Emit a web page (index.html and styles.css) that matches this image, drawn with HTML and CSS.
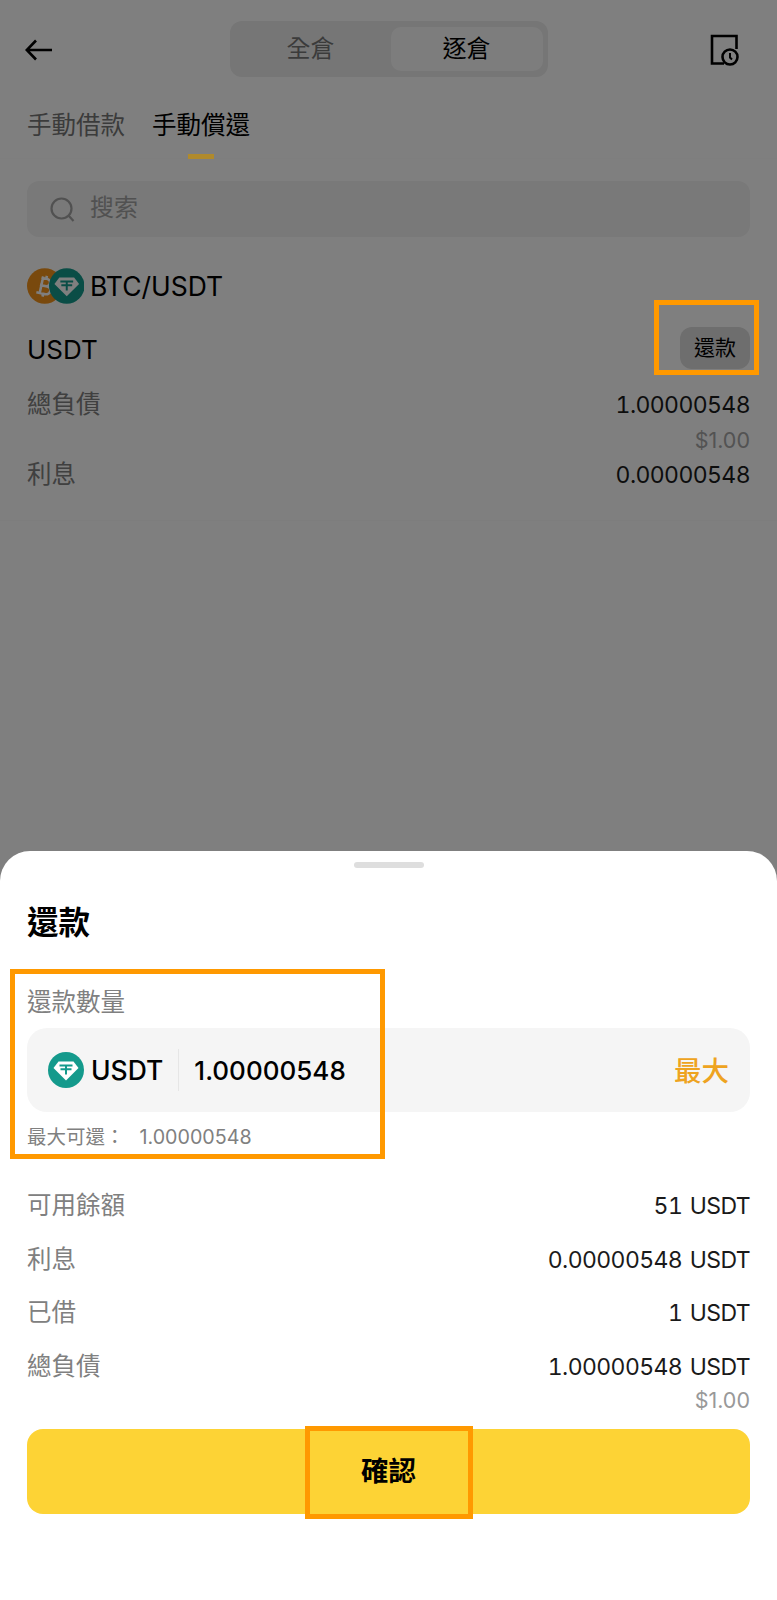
FILE: index.html
```html
<!DOCTYPE html>
<html lang="zh-Hant">
<head>
  <meta charset="UTF-8">
  <title>還款</title>
  <meta name="viewport" content="width=device-width, initial-scale=1.0">
  <link rel="stylesheet" href="styles.css">
</head>
<body>

<svg class="defs" width="0" height="0">
  <symbol id="tether" viewBox="0 0 36 36">
    <circle cx="18" cy="18" r="18" fill="#149a8c"/>
    <path d="M10.5 9.5h15l5 6.5L18 28.5 5.5 16z" fill="#fff"/>
    <path d="M11.5 13.5h13M18 13.5v9M12.5 17.2h11" stroke="#149a8c" stroke-width="2" fill="none"/>
  </symbol>
  <symbol id="btc" viewBox="0 0 36 36">
    <circle cx="18" cy="18" r="18" fill="#f2931a"/>
    <path d="M13 10.5h6.5a3.8 3.8 0 0 1 0 7.5H13m0 0h7.5a4 4 0 0 1 0 8H11M14.5 9v18M18 7.5v3M18 26v3" stroke="#fff" stroke-width="2.6" fill="none" transform="rotate(12 18 18)"/>
  </symbol>
</svg>

<div class="behind">
  <div class="header">
    <svg class="back" width="28" height="22" viewBox="0 0 28 22">
      <path d="M27 11H2M11 1.5L1.8 11l9.2 9.5" stroke="#000" stroke-width="2.6" fill="none"/>
    </svg>
    <div class="segment">
      <div class="segment-tab">全倉</div>
      <div class="segment-tab active">逐倉</div>
    </div>
    <svg class="history" width="30" height="32" viewBox="0 0 30 32">
      <path d="M14 29.500H2V2h24.500v13" stroke="#000" stroke-width="2.600" fill="none"/>
      <circle cx="20" cy="23" r="7.500" stroke="#000" stroke-width="2.600" fill="none"/>
      <path d="M20 19v4.500l2 2" stroke="#000" stroke-width="2" fill="none"/>
    </svg>
  </div>

  <div class="tabs">
    <div class="tab">手動借款</div>
    <div class="tab active">手動償還</div>
  </div>

  <div class="search">
    <svg width="25" height="25" viewBox="0 0 25 25">
      <circle cx="11.500" cy="11.500" r="10" stroke="#a3a3a3" stroke-width="2.200" fill="none"/>
      <path d="M18.500 18.500l5 5.500" stroke="#a3a3a3" stroke-width="2.200" fill="none"/>
    </svg>
    <span>搜索</span>
  </div>

  <div class="pair">
    <div class="pair-icons">
      <svg class="coin-back" width="36" height="36"><use href="#btc"/></svg>
      <svg class="coin-front" width="36" height="36"><use href="#tether"/></svg>
    </div>
    <span>BTC/USDT</span>
  </div>

  <div class="asset-row">
    <span>USDT</span>
    <div class="repay-btn">還款</div>
  </div>

  <div class="row first">
    <span class="label">總負債</span>
    <span class="value">1.00000548</span>
  </div>
  <div class="sub-value">$1.00</div>
  <div class="row after-sub">
    <span class="label">利息</span>
    <span class="value">0.00000548</span>
  </div>
  <div class="behind-line"></div>
</div>

<div class="scrim"></div>

<div class="sheet">
  <div class="handle"></div>
  <h2>還款</h2>
  <div class="field-label">還款數量</div>
  <div class="amount-box">
    <svg width="36" height="36"><use href="#tether"/></svg>
    <span class="coin-name">USDT</span>
    <div class="divider"></div>
    <span class="amount">1.00000548</span>
    <span class="max">最大</span>
  </div>
  <div class="max-line"><span>最大可還：</span><span class="max-value">1.00000548</span></div>

  <div class="details">
    <div class="row"><span class="label">可用餘額</span><span class="value">51 USDT</span></div>
    <div class="row"><span class="label">利息</span><span class="value">0.00000548 USDT</span></div>
    <div class="row"><span class="label">已借</span><span class="value">1 USDT</span></div>
    <div class="row"><span class="label">總負債</span><span class="value">1.00000548 USDT</span></div>
  </div>
  <div class="sub-value sheet-sub">$1.00</div>
  <div class="confirm">確認</div>
</div>

<!-- recuadros naranjas del tutorial -->
<div class="mark mark-repay"></div>
<div class="mark mark-amount"></div>
<div class="mark mark-confirm"></div>

</body>
</html>
```

FILE: styles.css
```css
* { box-sizing: border-box; }
body {
  position: relative;
  width: 777px;
  height: 1600px;
  margin: 0;
  overflow: hidden;
  background: #fff;
  color: #000;
  font-family: Inter, "Noto Sans CJK TC", sans-serif;
}
.defs { position: absolute; }

.behind { height: 851px; padding: 21px 27px 0; }
.header { display: grid; grid-template-columns: 1fr auto 1fr; align-items: center; }
.back { margin-left: -2px; margin-top: 2px; }
.history { justify-self: end; margin-right: 10px; margin-top: 2px; }
.segment {
  display: flex;
  gap: 4px;
  width: 318px;
  height: 56px;
  padding: 6px 5px;
  background: #ececec;
  border-radius: 12px;
}
.segment-tab {
  flex: 1;
  border-radius: 10px;
  font-size: 24px;
  line-height: 44px;
  text-align: center;
  color: #777;
}
.segment-tab.active { background: #fbfbfb; color: #000; }

.tabs { display: flex; gap: 27px; margin: 32px -27px 0; padding: 0 27px; height: 50px; border-bottom: 1px solid #fcfcfc; }
.tab { height: 50px; font-size: 24.5px; line-height: 32px; color: #777; }
.tab.active { color: #000; }
.tab.active::after {
  content: "";
  position: relative;
  z-index: 1;
  display: block;
  width: 26px;
  height: 5px;
  margin: 13px auto 0;
  background: #b08a2c;
}

.search {
  display: flex;
  align-items: center;
  gap: 15px;
  height: 56px;
  margin-top: 22px;
  padding-left: 23px;
  background: #f2f2f2;
  border-radius: 12px;
  font-size: 24px;
  line-height: 50px;
  color: #a3a3a3;
}
.search span { height: 50px; margin-top: -2px; }

.pair { display: flex; align-items: center; gap: 6px; height: 36px; margin-top: 31px; font-size: 26.500px; }
.pair-icons { display: flex; width: 57px; }
.coin-front { margin-left: -14px; }

.asset-row { display: flex; justify-content: space-between; align-items: center; height: 42px; margin-top: 23px; font-size: 26px; }
.asset-row > span { padding-top: 2px; }
.repay-btn {
  width: 70px;
  height: 42px;
  background: #dcdcdc;
  border-radius: 12px;
  font-size: 21px;
  line-height: 42px;
  text-align: center;
}

.row { display: flex; justify-content: space-between; line-height: 32px; height: 32px; }
.row.first { margin-top: 19px; }
.row.after-sub { margin-top: 5px; }
.label { font-size: 24.5px; color: #808080; }
.value { padding-top: 1px; font-size: 23px; font-feature-settings: "tnum"; letter-spacing: -.6px; word-spacing: 2px; color: #1a1a1a; }
.sub-value { margin-top: 7px; font-size: 21.500px; line-height: 26px; text-align: right; color: #a6a6a6; }
.behind-line { margin-top: 30px; margin-left: -27px; margin-right: -27px; height: 1px; background: #fafafa; }

.scrim { position: absolute; inset: 0; background: rgba(0, 0, 0, .5); }

.sheet {
  position: absolute;
  top: 851px;
  left: 0;
  right: 0;
  bottom: 0;
  padding: 11px 27px 0;
  background: #fff;
  border-radius: 30px 30px 0 0;
}
.handle { width: 70px; height: 6px; margin: 0 auto; background: #dedede; border-radius: 3px; }
h2 { margin: 35px 0 0; font-size: 31.500px; font-weight: 700; line-height: 40px; }
.field-label { margin-top: 43px; font-size: 24.5px; line-height: 32px; color: #808080; }

.amount-box {
  display: flex;
  align-items: center;
  height: 84px;
  margin-top: 10px;
  padding: 0 21px;
  background: #f5f5f5;
  border-radius: 20px;
}
.coin-name { margin-left: 7px; font-size: 26.500px; font-weight: 500; }
.divider { width: 1px; height: 42px; margin: 0 15px; background: #e6e6e6; }
.amount { font-size: 26px; font-weight: 500; }
.max { margin-left: auto; margin-top: -3px; font-size: 27.500px; font-weight: 500; color: #eea320; }

.max-line { display: flex; gap: 15px; margin-top: 12px; font-size: 19.500px; line-height: 26px; color: #808080; }
.max-value { font-size: 19.700px; }

.details { display: flex; flex-direction: column; gap: 21.500px; margin-top: 39px; }
.sheet-sub { margin-top: 5px; color: #999; }

.confirm {
  height: 85px;
  margin-top: 16px;
  background: #fdd335;
  border-radius: 16px;
  font-size: 27.500px;
  font-weight: 700;
  line-height: 85px;
  text-align: center;
}

.mark { position: absolute; border: 5px solid #ff9900; }
.mark-repay { left: 654px; top: 300px; width: 105px; height: 75px; }
.mark-amount { left: 10px; top: 969px; width: 375px; height: 190px; }
.mark-confirm { left: 305px; top: 1426px; width: 168px; height: 93px; }
```
